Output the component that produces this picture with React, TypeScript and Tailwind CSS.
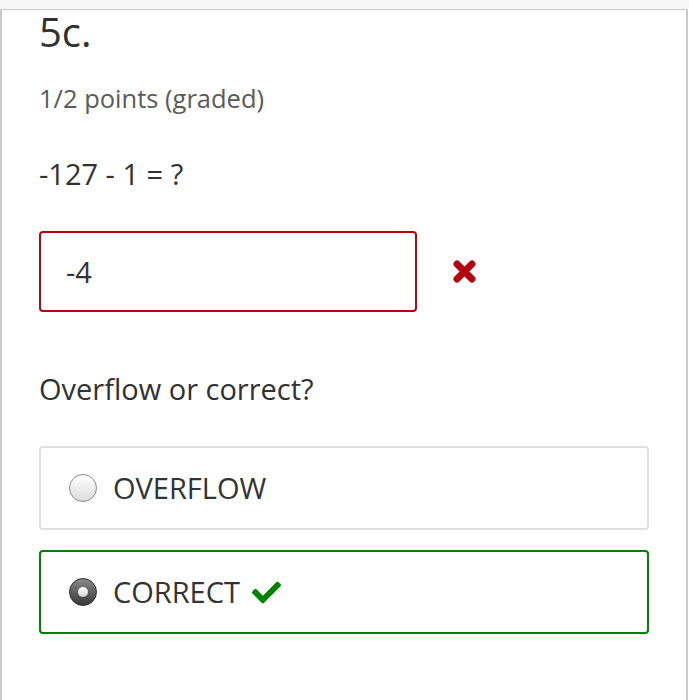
import { FaCheck } from "react-icons/fa";

type Choice = {
  label: string;
  selected: boolean;
  correct: boolean;
};

const choices: Choice[] = [
  { label: "OVERFLOW", selected: false, correct: false },
  { label: "CORRECT", selected: true, correct: true },
];

export default function App() {
  return (
    <div className="w-[689px] h-[700px] bg-white font-['Open_Sans',sans-serif] text-[#313131] overflow-hidden">
      <div className="h-[9px] bg-[#f6f6f6]" />

      <div className="w-[688px] h-[691px] border-t border-l-2 border-r-2 border-[#cbcbcb] pl-[37px] pt-[2px]">
        <h2 className="text-[40px] leading-[40px] font-normal">5c.</h2>

        <p className="mt-[34px] text-[25.5px] leading-[25px] text-[#5a5a5a]">
          1/2 points (graded)
        </p>

        <p className="mt-[49px] text-[29px] leading-[28px]">-127 - 1 = ?</p>

        <div className="mt-[43px] flex items-center">
          <div className="w-[378px] h-[81px] rounded-[4px] border-2 border-[#b20610] flex items-center pl-[25px] text-[29px] leading-[28px] text-[#333]">
            -4
          </div>
          <CrossIcon />
        </div>

        <p className="mt-[63px] text-[29px] leading-[28px]">Overflow or correct?</p>

        <div className="mt-[43px] w-[610px] flex flex-col gap-[20px]">
          {choices.map((choice) => (
            <ChoiceRow key={choice.label} choice={choice} />
          ))}
        </div>
      </div>
    </div>
  );
}

function CrossIcon() {
  return (
    <svg className="ml-[35px]" width="25" height="25" viewBox="0 0 25 25" fill="none">
      <path
        d="M5 5 L20 20 M20 5 L5 20"
        stroke="#b20610"
        strokeWidth="7"
        strokeLinecap="round"
      />
    </svg>
  );
}

function ChoiceRow({ choice }: { choice: Choice }) {
  const border = choice.selected
    ? choice.correct
      ? "border-[#008100]"
      : "border-[#b20610]"
    : "border-[#e0e0e0]";

  return (
    <div
      className={`h-[84px] rounded-[4px] border-2 ${border} flex items-center pl-[28px] text-[29px] leading-[28px] text-[#333]`}
    >
      <Radio checked={choice.selected} />
      <span className="ml-[16px]">{choice.label}</span>
      {choice.selected && choice.correct && (
        <FaCheck className="ml-[12px] text-[#008100]" size={29} />
      )}
    </div>
  );
}

function Radio({ checked }: { checked: boolean }) {
  if (checked) {
    return (
      <div className="w-[28px] h-[28px] rounded-full border border-[#2b2b2b] bg-gradient-to-b from-[#8a8a8a] to-[#3a3a3a] flex items-center justify-center">
        <div className="w-[10px] h-[10px] rounded-full bg-gradient-to-b from-white to-[#d6d6d6]" />
      </div>
    );
  }

  return (
    <div className="w-[28px] h-[28px] rounded-full border border-[#8a8a8a] bg-gradient-to-b from-white to-[#dcdcdc]" />
  );
}
